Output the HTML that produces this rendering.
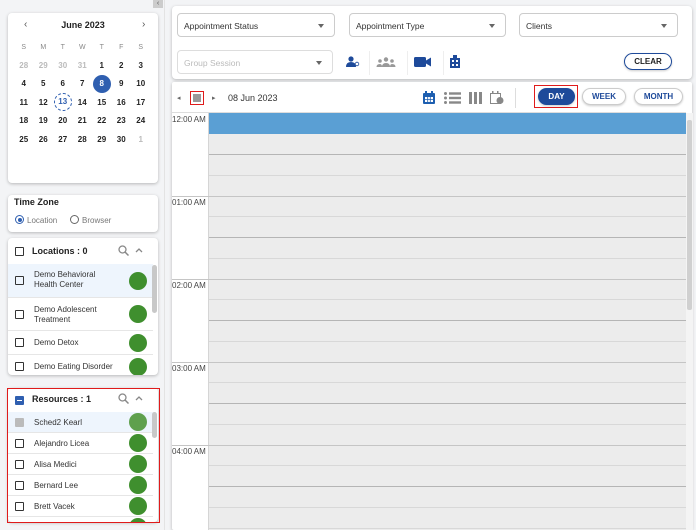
<!DOCTYPE html>
<html><head><meta charset="utf-8"><style>
*{box-sizing:border-box;margin:0;padding:0}
body{width:696px;height:530px;background:#f3f4f6;font-family:"Liberation Sans",sans-serif;position:relative;overflow:hidden;color:#222}
.a{position:absolute}
.card{position:absolute;background:#fff;border-radius:4px;box-shadow:0 1px 3px rgba(0,0,0,.25)}
.cal td{width:19.5px;height:18.5px;text-align:center;font-size:8px;font-weight:bold;color:#222}
.cal th{font-size:7px;font-weight:normal;color:#888;height:17px}
.g{color:#bbb!important}
.dd{position:absolute;border:1px solid #ccc;border-radius:4px;height:24px;font-size:8.5px;color:#333;padding:7px 0 0 6px;background:#fff}
.dd:after{content:"";position:absolute;right:10px;top:10px;border:3.5px solid transparent;border-top:4px solid #666}
.cb{position:absolute;width:9px;height:9px;border:1.5px solid #333;border-radius:1px}
.row{position:absolute;left:8px;width:145px;border-bottom:1px solid #e6e6e6;font-size:8px;color:#333}
.dot{position:absolute;right:6px;width:18px;height:18px;border-radius:50%;background:#3f8f2e}
.pill{position:absolute;height:17px;border-radius:9px;font-size:8px;font-weight:bold;text-align:center;line-height:15px;border:1px solid #ccc;color:#1e4a9a;background:#fff;box-shadow:0 1px 2px rgba(0,0,0,.2)}
.slot{position:absolute;left:209px;width:477px;height:1px;background:#d8d8d8}
.lbl{position:absolute;left:172px;font-size:8px;color:#444}
</style></head><body>
<div class="a" style="left:153px;top:0;width:10px;height:8px;background:#ccc;font-size:7px;text-align:center;line-height:8px;color:#555">‹</div>
<div class="a" style="left:164px;top:0;width:1px;height:530px;background:#e3e3e3"></div>

<div class="card" style="left:8px;top:13px;width:150px;height:170px">
<div class="a" style="left:16px;top:6px;font-size:10px;color:#555">‹</div>
<div class="a" style="left:0;width:150px;top:7px;text-align:center;font-size:9px;font-weight:bold">June 2023</div>
<div class="a" style="left:134px;top:6px;font-size:10px;color:#555">›</div>
<table class="cal a" style="left:6px;top:26px;border-collapse:collapse">
<tr><th>S</th><th>M</th><th>T</th><th>W</th><th>T</th><th>F</th><th>S</th></tr>
<tr><td class="g">28</td><td class="g">29</td><td class="g">30</td><td class="g">31</td><td>1</td><td>2</td><td>3</td></tr>
<tr><td>4</td><td>5</td><td>6</td><td>7</td><td><span style="display:inline-block;width:18px;height:18px;border-radius:50%;background:#2f5fb0;color:#fff;line-height:18px">8</span></td><td>9</td><td>10</td></tr>
<tr><td>11</td><td>12</td><td><span style="display:inline-block;width:18px;height:18px;border-radius:50%;border:1px dashed #2f5fb0;color:#2f5fb0;line-height:16px">13</span></td><td>14</td><td>15</td><td>16</td><td>17</td></tr>
<tr><td>18</td><td>19</td><td>20</td><td>21</td><td>22</td><td>23</td><td>24</td></tr>
<tr><td>25</td><td>26</td><td>27</td><td>28</td><td>29</td><td>30</td><td class="g">1</td></tr>
</table></div>

<div class="card" style="left:8px;top:195px;width:150px;height:37px">
<div class="a" style="left:6px;top:2px;font-size:9px;font-weight:bold">Time Zone</div>
<div class="a" style="left:7px;top:20px;width:9px;height:9px;border:1.3px solid #2f5fb0;border-radius:50%"><div style="margin:1.5px;width:4px;height:4px;border-radius:50%;background:#2f5fb0"></div></div>
<div class="a" style="left:19px;top:21px;font-size:8px;color:#777">Location</div>
<div class="a" style="left:62px;top:20px;width:9px;height:9px;border:1.3px solid #666;border-radius:50%"></div>
<div class="a" style="left:74px;top:21px;font-size:8px;color:#777">Browser</div>
</div>

<div class="card" style="left:8px;top:238px;width:150px;height:137px;overflow:hidden">
<div class="cb" style="left:7px;top:9px"></div>
<div class="a" style="left:24px;top:8px;font-size:9px;font-weight:bold">Locations : 0</div>
<svg class="a" style="left:110px;top:7px" width="11" height="11"><circle cx="4.5" cy="4.5" r="3.5" fill="none" stroke="#888" stroke-width="1.3"/><path d="M7 7L10.5 10.5" stroke="#888" stroke-width="1.5"/></svg>
<svg class="a" style="left:127px;top:9px" width="8" height="6"><path d="M1 5L4 2L7 5" fill="none" stroke="#888" stroke-width="1.3"/></svg>
</div>
<div class="row" style="top:264px;height:34px;background:#eef5fd"><div class="cb" style="left:7px;top:12px"></div><div class="a" style="left:26px;top:6px;line-height:10px">Demo Behavioral<br>Health Center</div><div class="dot" style="top:8px"></div></div>
<div class="row" style="top:298px;height:33px"><div class="cb" style="left:7px;top:12px"></div><div class="a" style="left:26px;top:7px;line-height:10px">Demo Adolescent<br>Treatment</div><div class="dot" style="top:7px"></div></div>
<div class="row" style="top:331px;height:24px"><div class="cb" style="left:7px;top:7px"></div><div class="a" style="left:26px;top:7px">Demo Detox</div><div class="dot" style="top:3px"></div></div>
<div class="row" style="top:355px;height:20px;overflow:hidden;border:none"><div class="cb" style="left:7px;top:7px"></div><div class="a" style="left:26px;top:7px">Demo Eating Disorder</div><div class="dot" style="top:3px"></div></div>
<div class="a" style="left:152px;top:265px;width:5px;height:48px;background:#c8c8c8;border-radius:3px"></div>

<div class="card" style="left:8px;top:388px;width:150px;height:134px;overflow:hidden">
<div class="a" style="left:7px;top:8px;width:9px;height:9px;background:#2f5fb0;border-radius:1px"><div style="margin:3.5px 2px;height:1.5px;background:#fff"></div></div>
<div class="a" style="left:24px;top:6px;font-size:9px;font-weight:bold">Resources : 1</div>
<svg class="a" style="left:110px;top:5px" width="11" height="11"><circle cx="4.5" cy="4.5" r="3.5" fill="none" stroke="#888" stroke-width="1.3"/><path d="M7 7L10.5 10.5" stroke="#888" stroke-width="1.5"/></svg>
<svg class="a" style="left:127px;top:7px" width="8" height="6"><path d="M1 5L4 2L7 5" fill="none" stroke="#888" stroke-width="1.3"/></svg>
</div>
<div class="row" style="top:412px;height:21px;background:#eef5fd"><div class="a" style="left:7px;top:6px;width:9px;height:9px;background:#bbb;border-radius:1px"></div><div class="a" style="left:26px;top:6px">Sched2 Kearl</div><div class="dot" style="top:1px;background:#5fa04d"></div></div>
<div class="row" style="top:433px;height:21px"><div class="cb" style="left:7px;top:6px"></div><div class="a" style="left:26px;top:6px">Alejandro Licea</div><div class="dot" style="top:1px"></div></div>
<div class="row" style="top:454px;height:21px"><div class="cb" style="left:7px;top:6px"></div><div class="a" style="left:26px;top:6px">Alisa Medici</div><div class="dot" style="top:1px"></div></div>
<div class="row" style="top:475px;height:21px"><div class="cb" style="left:7px;top:6px"></div><div class="a" style="left:26px;top:6px">Bernard Lee</div><div class="dot" style="top:1px"></div></div>
<div class="row" style="top:496px;height:21px"><div class="cb" style="left:7px;top:6px"></div><div class="a" style="left:26px;top:6px">Brett Vacek</div><div class="dot" style="top:1px"></div></div>
<div class="row" style="top:517px;height:5px;overflow:hidden;border:none"><div class="dot" style="top:1px"></div></div>
<div class="a" style="left:152px;top:412px;width:5px;height:26px;background:#c8c8c8;border-radius:3px"></div>
<div class="a" style="left:7px;top:388px;width:153px;height:135px;border:1.5px solid #e01b1b"></div>

<div class="card" style="left:172px;top:6px;width:520px;height:73px"></div>
<div class="dd" style="left:177px;top:13px;width:158px">Appointment Status</div>
<div class="dd" style="left:349px;top:13px;width:157px">Appointment Type</div>
<div class="dd" style="left:519px;top:13px;width:159px">Clients</div>
<div class="dd" style="left:177px;top:50px;width:156px;color:#bbb;border-color:#ddd">Group Session</div>
<svg class="a" style="left:346px;top:56px" width="14" height="12"><circle cx="5" cy="3" r="2.6" fill="#1e4a9a"/><path d="M0 11 Q0 6 5 6 Q10 6 10 11Z" fill="#1e4a9a"/><circle cx="11" cy="8" r="1.8" fill="none" stroke="#1e4a9a" stroke-width=".8"/></svg>
<div class="a" style="left:369px;top:51px;width:1px;height:24px;background:#eee"></div>
<svg class="a" style="left:375px;top:57px" width="22" height="11"><circle cx="11" cy="2.5" r="2.2" fill="#999"/><circle cx="5" cy="4" r="1.8" fill="#999"/><circle cx="17" cy="4" r="1.8" fill="#999"/><path d="M7 10Q7 6 11 6Q15 6 15 10Z M1.5 10Q1.5 7 5 7Q7 7 7 10Z M15 10Q15 7 17 7Q20.5 7 20.5 10Z" fill="#999"/></svg>
<div class="a" style="left:407px;top:51px;width:1px;height:24px;background:#eee"></div>
<svg class="a" style="left:414px;top:57px" width="18" height="10"><rect x="0" y="0" width="12" height="10" rx="1.5" fill="#1e4a9a"/><path d="M12 3.5L17 0.5V9.5L12 6.5Z" fill="#1e4a9a"/></svg>
<div class="a" style="left:443px;top:51px;width:1px;height:24px;background:#eee"></div>
<svg class="a" style="left:450px;top:55px" width="10" height="13"><path d="M3 0h4v3h3v10H0V3h3Z" fill="#1e4a9a"/><rect x="2" y="5" width="2" height="2" fill="#fff"/><rect x="6" y="5" width="2" height="2" fill="#fff"/><rect x="2" y="9" width="2" height="2" fill="#fff"/><rect x="6" y="9" width="2" height="2" fill="#fff"/></svg>
<div class="pill" style="left:624px;top:53px;width:48px;color:#222;border-color:#1e4a9a">CLEAR</div>

<div class="card" style="left:172px;top:82px;width:520px;height:448px;border-radius:2px"></div>
<div class="a" style="left:177px;top:94px;font-size:7px;color:#666">◂</div>
<div class="a" style="left:190px;top:91px;width:14px;height:14px;border:1.5px solid #e01b1b;padding:2px"><div style="width:100%;height:100%;background:#999"></div></div>
<div class="a" style="left:212px;top:94px;font-size:7px;color:#666">▸</div>
<div class="a" style="left:228px;top:93px;font-size:9px;color:#333">08 Jun 2023</div>
<svg class="a" style="left:423px;top:91px" width="12" height="13"><rect x="0" y="2" width="12" height="11" rx="1" fill="#1e5fb0"/><rect x="2" y="0" width="2" height="3" fill="#1e5fb0"/><rect x="8" y="0" width="2" height="3" fill="#1e5fb0"/><rect x="2" y="6" width="8" height="5" fill="#fff"/><path d="M2 8.5h8M4.7 6v5M7.3 6v5" stroke="#1e5fb0" stroke-width=".8"/></svg>
<svg class="a" style="left:444px;top:92px" width="17" height="12"><g fill="#888"><circle cx="1.5" cy="1.5" r="1.5"/><circle cx="1.5" cy="6" r="1.5"/><circle cx="1.5" cy="10.5" r="1.5"/><rect x="5" y="0.3" width="12" height="2.4"/><rect x="5" y="4.8" width="12" height="2.4"/><rect x="5" y="9.3" width="12" height="2.4"/></g></svg>
<svg class="a" style="left:469px;top:92px" width="13" height="12"><g fill="#888"><rect x="0" y="0" width="3" height="12"/><rect x="5" y="0" width="3" height="12"/><rect x="10" y="0" width="3" height="12"/></g></svg>
<svg class="a" style="left:490px;top:91px" width="14" height="13"><rect x="0.5" y="2.5" width="10" height="10" fill="none" stroke="#888"/><rect x="2" y="0" width="1.5" height="3" fill="#888"/><rect x="7" y="0" width="1.5" height="3" fill="#888"/><circle cx="10" cy="9.5" r="3.5" fill="#888"/></svg>
<div class="a" style="left:515px;top:88px;width:1px;height:20px;background:#ddd"></div>
<div class="a" style="left:534px;top:85px;width:44px;height:23px;border:1.5px solid #e01b1b"></div>
<div class="pill" style="left:538px;top:88px;width:37px;background:#1e4a9a;color:#fff;border-color:#1e4a9a">DAY</div>
<div class="pill" style="left:582px;top:88px;width:44px">WEEK</div>
<div class="pill" style="left:634px;top:88px;width:49px">MONTH</div>

<div class="a" style="left:208px;top:113px;width:478px;height:417px;background:#ececec;border-left:1px solid #d5d5d5"></div>
<div class="a" style="left:209px;top:113px;width:477px;height:21px;background:#5a9fd4"></div>
<div class="a" style="left:686px;top:113px;width:7px;height:417px;background:#f4f4f4"></div>
<div class="a" style="left:687px;top:120px;width:5px;height:190px;background:#d0d0d0;border-radius:2px"></div>
<div class="a" style="left:172px;top:112px;width:514px;height:1px;background:#ddd"></div>
<div class="lbl" style="top:115px">12:00 AM</div>
<div class="lbl" style="top:198px">01:00 AM</div>
<div class="lbl" style="top:281px">02:00 AM</div>
<div class="lbl" style="top:364px">03:00 AM</div>
<div class="lbl" style="top:447px">04:00 AM</div>
<div class="slot" style="top:154px;background:#b5b5b5"></div>
<div class="slot" style="top:175px"></div>
<div class="a" style="left:172px;top:196px;width:514px;height:1px;background:#c5c5c5"></div>
<div class="slot" style="top:216px"></div>
<div class="slot" style="top:237px;background:#b5b5b5"></div>
<div class="slot" style="top:258px"></div>
<div class="a" style="left:172px;top:279px;width:514px;height:1px;background:#c5c5c5"></div>
<div class="slot" style="top:299px"></div>
<div class="slot" style="top:320px;background:#b5b5b5"></div>
<div class="slot" style="top:341px"></div>
<div class="a" style="left:172px;top:362px;width:514px;height:1px;background:#c5c5c5"></div>
<div class="slot" style="top:382px"></div>
<div class="slot" style="top:403px;background:#b5b5b5"></div>
<div class="slot" style="top:424px"></div>
<div class="a" style="left:172px;top:445px;width:514px;height:1px;background:#c5c5c5"></div>
<div class="slot" style="top:465px"></div>
<div class="slot" style="top:486px;background:#b5b5b5"></div>
<div class="slot" style="top:507px"></div>
<div class="slot" style="top:528px"></div>
</body></html>
